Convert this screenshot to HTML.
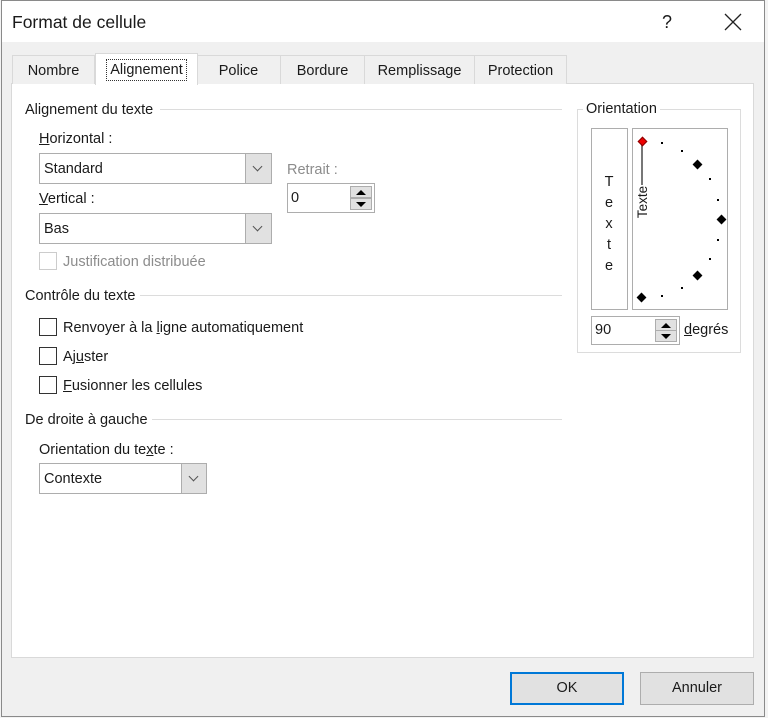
<!DOCTYPE html>
<html><head><meta charset="utf-8"><style>
*{box-sizing:border-box;margin:0;padding:0}
body{width:768px;height:718px;background:#f3f3f3;position:relative;overflow:hidden;font-family:"Liberation Sans",sans-serif;font-size:14.5px;color:#1a1a1a}
.a{position:absolute}
.t{position:absolute;line-height:20px;white-space:nowrap}
.dlg{left:1px;top:0;width:764px;height:717px;border:1px solid #8a8a8a;background:#f0f0f0}
.tb{position:absolute;top:55px;height:29px;border:1px solid #d9d9d9;border-bottom:none;background:#f0f0f0;text-align:center;line-height:30px;font-size:14.5px}
.sel{position:absolute;border:1px solid #adadad;background:#fff}
.sel .b{position:absolute;right:0;top:0;bottom:0;width:26px;background:#e1e1e1;border-left:1px solid #adadad}
.sel .b:after{content:"";position:absolute;left:8px;top:9px;width:6px;height:6px;border-right:1px solid #555;border-bottom:1px solid #555;transform:rotate(45deg)}
.ln{position:absolute;height:1px;background:#dcdcdc}
.cb{position:absolute;width:18px;height:18px;border:1px solid #333;background:#fff}
.u{text-decoration:underline}
.spin{position:absolute;border:1px solid #adadad;background:#fff}
.sb{position:absolute;right:2px;width:22px;height:12px;background:#e1e1e1;border:1px solid #adadad}
.up:after,.dn:after{content:"";position:absolute;left:5px;border-left:5px solid transparent;border-right:5px solid transparent}
.up:after{top:3px;border-bottom:5px solid #000}
.dn:after{top:3px;border-top:5px solid #000}
.btn{position:absolute;top:672px;width:114px;height:33px;background:#e1e1e1;border:1px solid #adadad;text-align:center;line-height:31px;font-size:14.5px}
.dot{position:absolute;width:2px;height:2px;background:#000}
.dia{position:absolute;width:7px;height:7px;background:#000;transform:rotate(45deg)}
</style></head><body>
<div class="a dlg"></div>
<div class="a" style="left:2px;top:1px;width:762px;height:41px;background:#fff"></div>
<div class="t" style="left:12px;top:11px;font-size:17.5px;line-height:22px">Format de cellule</div>
<div class="t" style="left:662px;top:11px;font-size:18px;line-height:22px">?</div>
<svg class="a" style="left:724px;top:13px" width="18" height="18"><path d="M1 1L17 17M17 1L1 17" stroke="#222" stroke-width="1.3"/></svg>

<div class="a" style="left:11px;top:83px;width:743px;height:575px;background:#fff;border:1px solid #d9d9d9"></div>
<div class="tb" style="left:12px;width:83px">Nombre</div>
<div class="tb" style="left:196px;width:85px">Police</div>
<div class="tb" style="left:280px;width:85px">Bordure</div>
<div class="tb" style="left:364px;width:111px">Remplissage</div>
<div class="tb" style="left:474px;width:93px">Protection</div>
<div class="tb" style="left:95px;top:53px;width:103px;height:32px;background:#fff;line-height:32px"><span style="border:1px dotted #333;padding:2px 3px">Alignement</span></div>

<div class="t" style="left:25px;top:100px">Alignement du texte</div>
<div class="ln" style="left:160px;top:109px;width:402px"></div>
<div class="t" style="left:39px;top:129px"><span class="u">H</span>orizontal :</div>
<div class="sel" style="left:39px;top:153px;width:233px;height:31px"><div class="t" style="left:4px;top:5px">Standard</div><div class="b"></div></div>
<div class="t" style="left:287px;top:160px;color:#8c8c8c">Retrait :</div>
<div class="spin" style="left:287px;top:183px;width:88px;height:30px"><div class="t" style="left:3px;top:4px">0</div><div class="sb up" style="top:2px"></div><div class="sb dn" style="top:14px"></div></div>
<div class="t" style="left:39px;top:189px"><span class="u">V</span>ertical :</div>
<div class="sel" style="left:39px;top:213px;width:233px;height:31px"><div class="t" style="left:4px;top:5px">Bas</div><div class="b"></div></div>
<div class="cb" style="left:39px;top:252px;border-color:#ccc"></div>
<div class="t" style="left:63px;top:252px;color:#8c8c8c">Justification distribuée</div>

<div class="t" style="left:25px;top:286px">Contrôle du texte</div>
<div class="ln" style="left:140px;top:295px;width:422px"></div>
<div class="cb" style="left:39px;top:318px"></div>
<div class="t" style="left:63px;top:318px">Renvoyer à la <span class="u">l</span>igne automatiquement</div>
<div class="cb" style="left:39px;top:347px"></div>
<div class="t" style="left:63px;top:347px">Aj<span class="u">u</span>ster</div>
<div class="cb" style="left:39px;top:376px"></div>
<div class="t" style="left:63px;top:376px"><span class="u">F</span>usionner les cellules</div>

<div class="t" style="left:25px;top:410px">De droite à gauche</div>
<div class="ln" style="left:152px;top:419px;width:410px"></div>
<div class="t" style="left:39px;top:440px">Orientation du te<span class="u">x</span>te :</div>
<div class="sel" style="left:39px;top:463px;width:168px;height:31px"><div class="t" style="left:4px;top:5px">Contexte</div><div class="b" style="width:25px"></div></div>

<div class="a" style="left:577px;top:109px;width:164px;height:244px;border:1px solid #dcdcdc"></div>
<div class="t" style="left:583px;top:99px;background:#fff;padding:0 3px">Orientation</div>
<div class="a" style="left:591px;top:128px;width:37px;height:182px;border:1px solid #adadad"></div>
<div class="t" style="left:604px;top:172px;line-height:21px;text-align:center;width:10px">T<br>e<br>x<br>t<br>e</div>
<div class="a" style="left:632px;top:128px;width:96px;height:182px;border:1px solid #adadad"></div>
<div class="a" style="left:641px;top:145px;width:2px;height:40px;background:#777"></div>
<div class="t" style="left:624px;top:192px;transform:rotate(-90deg);font-size:13.5px;width:38px;text-align:center">Texte</div>
<div class="dia" style="left:639px;top:138px;background:#e00;border:1px solid #800"></div>
<div class="dot" style="left:661px;top:142px"></div>
<div class="dot" style="left:681px;top:150px"></div>
<div class="dia" style="left:694px;top:161px"></div>
<div class="dot" style="left:709px;top:178px"></div>
<div class="dot" style="left:717px;top:199px"></div>
<div class="dia" style="left:718px;top:216px"></div>
<div class="dot" style="left:717px;top:239px"></div>
<div class="dot" style="left:709px;top:258px"></div>
<div class="dia" style="left:694px;top:272px"></div>
<div class="dot" style="left:681px;top:287px"></div>
<div class="dot" style="left:661px;top:295px"></div>
<div class="dia" style="left:638px;top:294px"></div>
<div class="spin" style="left:591px;top:316px;width:89px;height:29px"><div class="t" style="left:3px;top:3px">90</div><div class="sb up" style="top:2px"></div><div class="sb dn" style="top:13px"></div></div>
<div class="t" style="left:684px;top:320px"><span class="u">d</span>egrés</div>

<div class="btn" style="left:510px;border:2px solid #0078d7;line-height:29px">OK</div>
<div class="btn" style="left:640px">Annuler</div>
</body></html>
